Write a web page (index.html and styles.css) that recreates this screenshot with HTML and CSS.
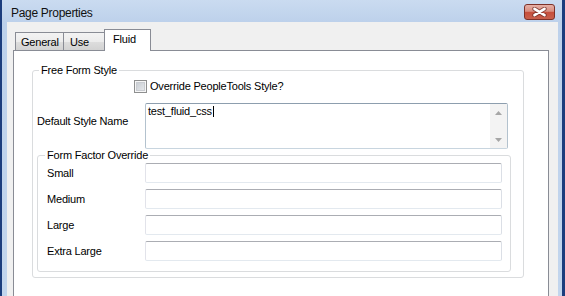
FILE: index.html
```html
<!DOCTYPE html>
<html>
<head>
<meta charset="utf-8">
<link rel="stylesheet" href="styles.css">
</head>
<body>
<div class="window">
  <div class="titlebar">
    <span class="title">Page Properties</span>
    <div class="close">
      <svg width="15" height="10" viewBox="0 0 15 10">
        <path d="M2.5 1.8 L12.5 8.2 M12.5 1.8 L2.5 8.2" stroke="#6b2a22" stroke-width="4.4" stroke-linecap="round" fill="none" opacity="0.7"/>
        <path d="M2.5 1.8 L12.5 8.2 M12.5 1.8 L2.5 8.2" stroke="#ffffff" stroke-width="2.6" stroke-linecap="round" fill="none"/>
      </svg>
    </div>
  </div>
  <div class="client">
    <div class="tabs">
      <div class="tab tab-general">General</div>
      <div class="tab tab-use">Use</div>
      <div class="tab tab-fluid">Fluid</div>
    </div>
    <div class="panel">
      <fieldset class="group outer">
        <legend>Free Form Style</legend>
        <div class="check-row">
          <span class="checkbox"></span>
          <span class="check-label">Override PeopleTools Style?</span>
        </div>
        <div class="style-row">
          <span class="style-label">Default Style Name</span>
          <div class="textarea">
            <div class="ta-text">test_fluid_css<span class="caret"></span></div>
            <div class="scrollbar">
              <div class="sb-btn">
                <svg width="7" height="4" viewBox="0 0 7 4"><path d="M0 4 L3.5 0 L7 4 Z" fill="#a6a6a6"/></svg>
              </div>
              <div class="sb-btn">
                <svg width="7" height="4" viewBox="0 0 7 4"><path d="M0 0 L3.5 4 L7 0 Z" fill="#a6a6a6"/></svg>
              </div>
            </div>
          </div>
        </div>
        <fieldset class="group inner">
          <legend>Form Factor Override</legend>
          <div class="ff-grid">
            <span class="ff-label">Small</span><div class="input"></div>
            <span class="ff-label">Medium</span><div class="input"></div>
            <span class="ff-label">Large</span><div class="input"></div>
            <span class="ff-label">Extra Large</span><div class="input"></div>
          </div>
        </fieldset>
      </fieldset>
    </div>
  </div>
</div>
</body>
</html>
```
FILE: styles.css
```css
* { box-sizing: border-box; }

body {
  margin: 0;
  font-family: "Liberation Sans", Arial, sans-serif;
  font-size: 11px;
  color: #000;
  letter-spacing: -0.2px;
}

.window {
  width: 565px;
  height: 296px;
  overflow: hidden;
  display: flex;
  flex-direction: column;
  background: linear-gradient(#cadbf0, #bdd1eb 22px, #c2d5ed);
  border-left: 2px solid #1c3d7d;
  border-right: 3px solid #1c3d7d;
  padding: 0 4px 0 5px;
}

.titlebar {
  height: 22px;
  flex: none;
  display: flex;
  align-items: flex-start;
  padding-left: 4px;
}

.title {
  font-size: 12px;
  line-height: 14px;
  margin-top: 6px;
  letter-spacing: -0.3px;
  color: #111;
}

.close {
  margin-left: auto;
  margin-top: 4px;
  margin-right: 3px;
  width: 31px;
  height: 16px;
  border: 1px solid #7d3128;
  border-radius: 3px;
  background: linear-gradient(#e6b0a6, #d98e80 45%, #c64f3c 52%, #c9604c);
  display: flex;
  align-items: center;
  justify-content: center;
}

.close svg { display: block; }

.client {
  flex: 1;
  min-height: 0;
  background: #f0f0f0;
  padding: 7px 9px 0 6px;
  display: flex;
  flex-direction: column;
}

.tabs {
  flex: none;
  height: 21px;
  display: flex;
  align-items: flex-end;
  padding-left: 2px;
}

.tab {
  height: 18px;
  border: 1px solid #898c95;
  border-bottom: 0;
  background: linear-gradient(#f3f3f3, #ececec 50%, #dedede 50%, #d2d2d2);
  padding-top: 3px;
  line-height: 13px;
  white-space: nowrap;
}

.tab-general { width: 49px; padding-left: 5px; }
.tab-use { width: 41px; border-left: 0; padding-left: 6px; }

.tab-fluid {
  width: 47px;
  height: 22px;
  margin-left: -1px;
  margin-bottom: -1px;
  background: #fff;
  position: relative;
  z-index: 1;
  padding-left: 8px;
}

.panel {
  flex: none;
  height: 270px;
  background: #fff;
  border: 1px solid #898c95;
  padding: 13px 24px 0 18px;
}

.group {
  margin: 0;
  min-width: 0;
  border: 1px solid #dadcde;
  border-radius: 3px;
}

.group legend {
  line-height: 13px;
  padding: 0 2px;
}

.outer { padding: 0 12px 5px 4px; }
.outer > legend { margin-left: 2px; }

.check-row {
  display: flex;
  align-items: center;
  height: 13px;
  margin-top: 3px;
  padding-left: 97px;
  line-height: 13px;
}

.checkbox {
  width: 13px;
  height: 13px;
  flex: none;
  border: 1px solid #8e8f8f;
  background: linear-gradient(135deg, #c3c8ce, #eceef0);
  box-shadow: inset 0 0 0 1px #f6f6f6, inset 0 0 0 2px #c9ccd1;
}

.check-label { margin-left: 3px; white-space: nowrap; }

.style-row {
  display: grid;
  grid-template-columns: 108px 363px;
  margin-top: 10px;
}

.style-label {
  padding-top: 12px;
  line-height: 13px;
  white-space: nowrap;
}

.textarea {
  height: 46px;
  display: flex;
  background: #fff;
  border: 1px solid;
  border-color: #8d9eae #b3c2ce #c8d5df #b3c2ce;
  border-radius: 2px;
}

.ta-text {
  flex: 1;
  padding: 1px 0 0 2px;
  line-height: 13px;
  white-space: nowrap;
}

.caret {
  display: inline-block;
  width: 1px;
  height: 11px;
  background: #000;
  margin-left: 1px;
  vertical-align: -2px;
}

.scrollbar {
  width: 17px;
  flex: none;
  background: #f3f3f3;
  display: flex;
  flex-direction: column;
  justify-content: space-between;
}

.sb-btn {
  height: 17px;
  display: flex;
  align-items: center;
  justify-content: center;
}

.sb-btn svg { display: block; }

.inner { padding: 1px 8px 10px 9px; }
.inner > legend { margin-left: -2px; }

.ff-grid {
  display: grid;
  grid-template-columns: 98px 357px;
  row-gap: 6px;
  align-items: center;
}

.ff-label {
  line-height: 13px;
  white-space: nowrap;
}

.input {
  height: 20px;
  background: #fff;
  border: 1px solid;
  border-color: #abadb3 #dbdfe6 #e3e9ef #e2e3ea;
  border-radius: 2px;
}
```
